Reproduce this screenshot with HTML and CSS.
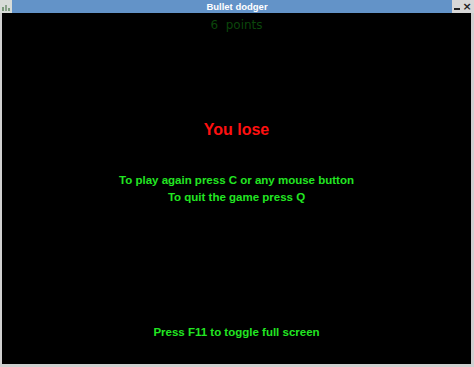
FILE: index.html
```html
<!DOCTYPE html>
<html>
<head><link rel="stylesheet" href="styles.css"></head>
<body>
<div class="window">
  <div class="titlebar">
    <div class="ticon"><svg width="10" height="10" viewBox="0 0 10 10"><rect x="1" y="5" width="2" height="4" fill="#7a9a7a"/><rect x="4" y="3" width="2" height="6" fill="#8aa08a"/><rect x="7" y="6" width="2" height="3" fill="#7a9a7a"/></svg></div>
    <div class="title">Bullet dodger</div>
    <div class="controls"><span class="min"></span><span class="close">×</span></div>
  </div>
  <div class="game">
    <div class="score">6 &nbsp;points</div>
    <div class="lose">You lose</div>
    <div class="msg">To play again press C or any mouse button</div>
    <div class="msg second">To quit the game press Q</div>
    <div class="spacer"></div>
    <div class="msg f11">Press F11 to toggle full screen</div>
  </div>
</div>
</body>
</html>
```
FILE: styles.css
```css
html, body { margin: 0; padding: 0; }
body { width: 474px; height: 367px; background: #d4d4d4; overflow: hidden; font-family: "DejaVu Sans", sans-serif; }
.window { display: flex; flex-direction: column; width: 474px; height: 367px; background: #d0d0d0; }
.titlebar { display: flex; height: 13px; flex: none; }
.ticon { width: 12px; background: #d8dcd8; display: flex; align-items: center; justify-content: center; }
.title { flex: 1; background: #6393c8; color: #fff; font-family: "Liberation Sans", Arial, sans-serif; font-size: 9.5px; font-weight: bold; text-align: center; line-height: 13px; padding-left: 10px; }
.controls { width: 22px; background: #d8d8d8; display: flex; align-items: center; justify-content: center; gap: 2px; }
.min { width: 6px; height: 2px; background: #222; margin-top: 5px; }
.close { font-size: 11px; font-weight: bold; color: #222; line-height: 13px; }
.game { flex: 1; margin: 0 3px 3px 2px; background: #000; display: flex; flex-direction: column; align-items: center; font-family: "Liberation Sans", Arial, sans-serif; font-weight: bold; }
.score { color: #0b460b; font-family: "DejaVu Sans", sans-serif; font-weight: normal; font-size: 12px; margin-top: 5px; line-height: 14px; }
.lose { color: #ff1010; font-size: 16px; margin-top: 89px; line-height: 18px; }
.msg { color: #22e622; font-size: 11.5px; line-height: 16px; }
.lose + .msg { margin-top: 33px; }
.second { margin-top: 1px; }
.spacer { flex: 1; }
.f11 { margin-bottom: 24px; }
```
